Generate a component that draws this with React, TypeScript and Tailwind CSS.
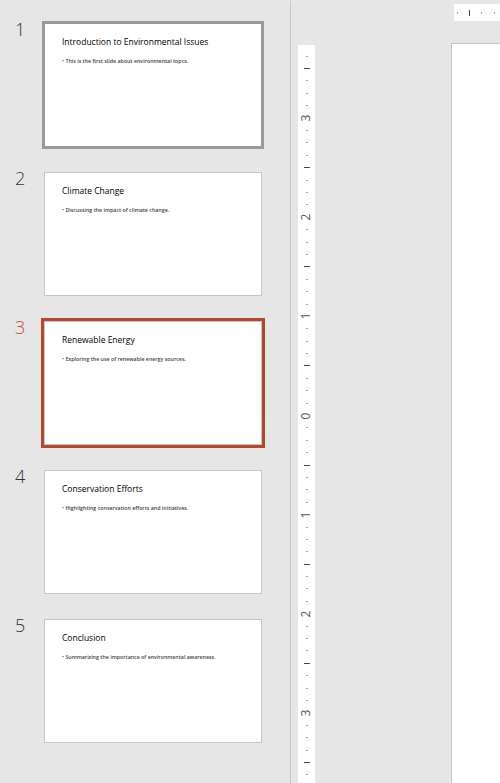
const slides = [
  { n: 1, title: 'Introduction to Environmental Issues', body: 'This is the first slide about environmental topcs.', state: 'viewed' },
  { n: 2, title: 'Climate Change', body: 'Discussing the impact of climate change.', state: 'normal' },
  { n: 3, title: 'Renewable Energy', body: 'Exploring the use of renewable energy sources.', state: 'active' },
  { n: 4, title: 'Conservation Efforts', body: 'Highlighting conservation efforts and initiatives.', state: 'normal' },
  { n: 5, title: 'Conclusion', body: 'Summarizing the importance of environmental awareness.', state: 'normal' },
];

// 3 2 1 0 1 2 3 with quarter ticks between, every 4th tick is the long one
const verticalMarks = Array.from({ length: 60 }, (_, i) => {
  const offset = i - 29;
  if (offset % 8 === 0) return String(Math.abs(offset) / 8);
  if (offset % 4 === 0) return 'major';
  return 'minor';
});

function Thumbnail({ slide }: { slide: (typeof slides)[number] }) {
  const frame =
    slide.state === 'active'
      ? 'border-[#c6c6c6] outline-3 outline-[#b7472a]'
      : slide.state === 'viewed'
        ? 'border-[#999999] outline-2 outline-[#999999]'
        : 'border-[#c6c6c6]';

  return (
    <div className="flex h-[124px]">
      <div
        className={`w-[44px] pl-[15px] -mt-[6px] text-[18px] leading-[24px] font-light ${
          slide.state === 'active' ? 'text-[#d24726]' : 'text-[#333333]'
        }`}
      >
        {slide.n}
      </div>
      <div className={`w-[218px] h-[124px] bg-white border pl-[17px] pt-[11px] ${frame}`}>
        <div className="text-[8.5px] leading-[14px] text-black">{slide.title}</div>
        <div className="mt-[8px] text-[5.3px] leading-[8px] text-[#444444] font-semibold whitespace-nowrap">
          <span className="text-[#b7472a]">•</span> {slide.body}
        </div>
      </div>
    </div>
  );
}

function VerticalRuler() {
  return (
    <div className="w-[17px] mt-[45px] bg-white overflow-hidden pt-[5px]">
      {verticalMarks.map((mark, i) => (
        <div key={i} className="h-[12.4px] flex items-center justify-center">
          {mark === 'minor' && <div className="w-[2px] h-[1px] bg-[#a6a6a6]" />}
          {mark === 'major' && <div className="w-[6px] h-[1px] bg-[#444444]" />}
          {mark !== 'minor' && mark !== 'major' && (
            <span className="-rotate-90 text-[12px] leading-[12px] text-[#555555]">{mark}</span>
          )}
        </div>
      ))}
    </div>
  );
}

function HorizontalRuler() {
  return (
    <div className="h-[17px] mt-[4px] ml-[139px] bg-white overflow-hidden">
      <div className="h-full flex -ml-[3px]">
        {['minor', 'major', 'minor', 'minor'].map((mark, i) => (
          <div key={i} className="w-[12.4px] shrink-0 flex items-center justify-center">
            {mark === 'minor' ? (
              <div className="w-[1px] h-[2px] bg-[#a6a6a6]" />
            ) : (
              <div className="w-[1px] h-[6px] bg-[#444444]" />
            )}
          </div>
        ))}
      </div>
    </div>
  );
}

export default function App() {
  return (
    <div className="w-[500px] h-[783px] flex bg-[#e6e6e6] overflow-hidden font-['Open_Sans','Noto_Sans',sans-serif]">
      {/* Thumbnail pane */}
      <div className="w-[290px] shrink-0 pt-[23px] flex flex-col gap-[25px]">
        {slides.map((slide) => (
          <Thumbnail key={slide.n} slide={slide} />
        ))}
      </div>

      <div className="w-[1px] mt-[1px] bg-[#c6c6c6]" />

      {/* Editing area */}
      <div className="flex-1 flex pl-[7px] min-w-0">
        <VerticalRuler />
        <div className="flex-1 min-w-0 flex flex-col">
          <HorizontalRuler />
          <div className="flex-1 mt-[22px] ml-[136px] bg-white border-t border-l border-[#c6c6c6]" />
        </div>
      </div>
    </div>
  );
}
